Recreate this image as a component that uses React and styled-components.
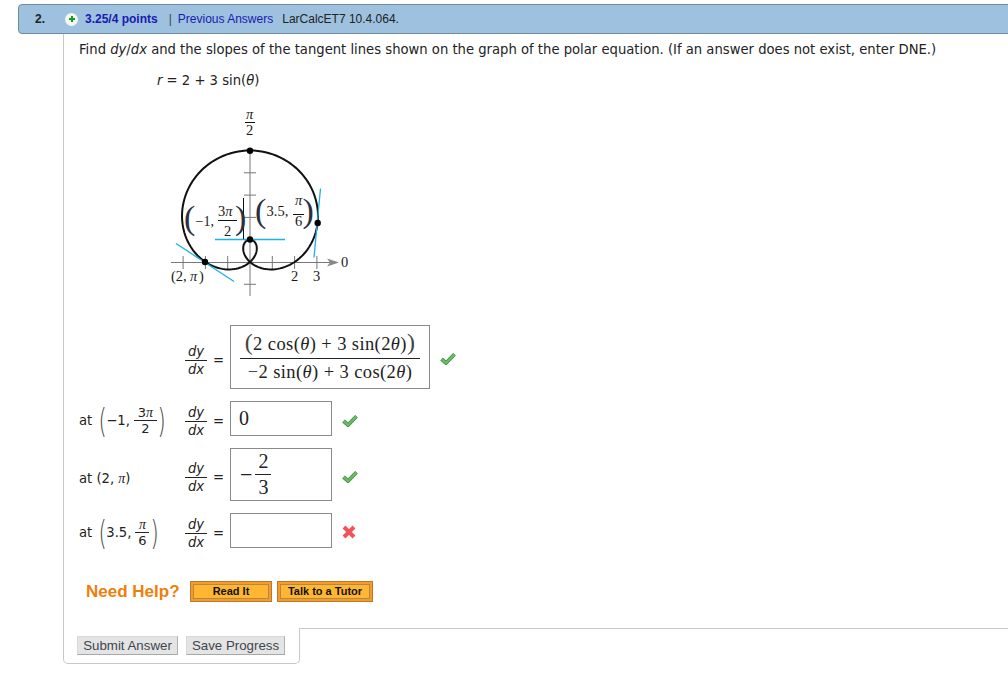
import React from "react";
import styled, { createGlobalStyle } from "styled-components";

const GlobalStyle = createGlobalStyle`
  html, body { margin: 0; padding: 0; background: #fff; }
  body { font-family: "DejaVu Sans", sans-serif; color: #222; }
`;

const ORIGIN = { x: 250, y: 263 };
const UNIT = 22.3;

// r = 2 + 3 sin(theta), in page pixels
function polarPath() {
  const pts = [];
  for (let i = 0; i <= 360; i += 2) {
    const t = (i * Math.PI) / 180;
    const r = 2 + 3 * Math.sin(t);
    const x = ORIGIN.x + r * Math.cos(t) * UNIT;
    const y = ORIGIN.y - r * Math.sin(t) * UNIT;
    pts.push(`${i === 0 ? "M" : "L"}${x.toFixed(2)} ${y.toFixed(2)}`);
  }
  return pts.join(" ");
}

const XTICKS = [-3, -2, -1, 1, 2, 3];
const YTICKS = [-1, 1, 2, 3, 4];

function PolarGraph() {
  return (
    <GraphSvg viewBox="150 100 200 200" width="200" height="200">
      <g stroke="#777" strokeWidth="1" fill="none">
        <path d="M171 263.5H330M250 152V297" />
        {XTICKS.map((k) => (
          <path key={k} d={`M${ORIGIN.x + k * UNIT} 257V270`} />
        ))}
        {YTICKS.map((k) => (
          <path key={k} d={`M244 ${ORIGIN.y - k * UNIT}H256`} />
        ))}
      </g>
      <path d="M339 263.5L327 259.5L330 263.5L327 267.5Z" fill="#888" />
      <path d={polarPath()} fill="none" stroke="#111" strokeWidth="2" />
      <g stroke="#1fb0e6" strokeWidth="1.3" fill="none">
        <path d="M215 240.5H285" />
        <path d="M176 244.5L234 282.5" />
        <path d="M320.5 189.5L314 258.5" />
      </g>
      <path d="M243.5 199V240" stroke="#111" strokeWidth="1" />
      <g fill="#000">
        <circle cx="250" cy="151.7" r="3.2" />
        <circle cx="250" cy="240.5" r="3.2" />
        <circle cx="205" cy="263" r="3.2" />
        <circle cx="317.7" cy="224" r="3.2" />
      </g>
      <GraphText>
        <tspan x="246" y="120" fontStyle="italic">π</tspan>
        <tspan x="246" y="136">2</tspan>
        <tspan x="341" y="268">0</tspan>
        <tspan x="291" y="282">2</tspan>
        <tspan x="313" y="282">3</tspan>
        <tspan x="171" y="282">(2,</tspan>
        <tspan x="190" y="282" fontStyle="italic">π</tspan>
        <tspan x="199" y="282">)</tspan>
        <tspan x="218" y="217">3</tspan>
        <tspan fontStyle="italic">π</tspan>
        <tspan x="224" y="237">2</tspan>
        <tspan x="266.5" y="217">3.5,</tspan>
        <tspan x="295" y="206" fontStyle="italic">π</tspan>
        <tspan x="295" y="227">6</tspan>
      </GraphText>
      <GraphLead x="195.5" y="227">−1,</GraphLead>
      <path d="M218 221.5H237M293 215.5H304M245 123.5H255" stroke="#111" strokeWidth="1" />
      <GraphParen x="184" y="229.5">(</GraphParen>
      <GraphParen x="235" y="229.5">)</GraphParen>
      <GraphParen x="255" y="223">(</GraphParen>
      <GraphParen x="302.5" y="223">)</GraphParen>
    </GraphSvg>
  );
}

function Check() {
  return (
    <MarkSvg viewBox="0 0 16 13" width="16" height="13">
      <path d="M1.5 7L6 11L14.5 2.2" fill="none" stroke="#3f8f3f" strokeWidth="3.8" />
      <path d="M1.5 7L6 11L14.5 2.2" fill="none" stroke="#6fbb6a" strokeWidth="2.2" />
    </MarkSvg>
  );
}

function Cross() {
  return (
    <MarkSvg viewBox="0 0 14 14" width="14" height="14">
      <path d="M2 2L12 12M12 2L2 12" fill="none" stroke="#f2545b" strokeWidth="4" />
    </MarkSvg>
  );
}

function DyDx() {
  return (
    <DerivWrap>
      <Frac>
        <Num><i>dy</i></Num>
        <Den $width={22}><i>dx</i></Den>
      </Frac>
      <Equals>=</Equals>
    </DerivWrap>
  );
}

function SansFrac({ top, bottom, width }) {
  return (
    <FracSlot $width={width}>
      <SmallNum>{top}</SmallNum>
      <SmallDen>{bottom}</SmallDen>
    </FracSlot>
  );
}

export default function App() {
  return (
    <Page>
      <GlobalStyle />
      <Header>
        <QNumber>2.</QNumber>
        <PlusBadge>
          <svg viewBox="0 0 8 8" width="8" height="8">
            <path d="M4 1V7M1 4H7" stroke="#1c9a1c" strokeWidth="2" />
          </svg>
        </PlusBadge>
        <Points>3.25/4 points</Points>
        <Divider>|</Divider>
        <HeaderLink>Previous Answers</HeaderLink>
        <SourceCode>LarCalcET7 10.4.064.</SourceCode>
      </Header>

      <Body>
        <Prompt>
          Find <i>dy</i>/<i>dx</i> and the slopes of the tangent lines shown on the graph of the polar equation. (If an answer does not exist, enter DNE.)
        </Prompt>
        <Equation>
          <i>r</i> = 2 + 3 sin(<i>θ</i>)
        </Equation>
        <PolarGraph />

        <Rows>
          <Row>
            <RowLabel />
            <DyDx />
            <AnswerBox $width={200} $height={64}>
              <Frac>
                <MathNum>
                  <BigParen>(</BigParen>2 cos(<i>θ</i>) + 3 sin(2<i>θ</i>)<BigParen>)</BigParen>
                </MathNum>
                <MathDen>−2 sin(<i>θ</i>) + 3 cos(2<i>θ</i>)</MathDen>
              </Frac>
            </AnswerBox>
            <Check />
          </Row>
          <Row>
            <RowLabel $drop={2}>
              <AtWord>at</AtWord>
              <TallParen>(</TallParen>−1,
              <SansFrac width={23} top={<>3<Pi>π</Pi></>} bottom="2" />
              <TallParen>)</TallParen>
            </RowLabel>
            <DyDx />
            <AnswerBox $width={102} $height={35}>
              <MathValue>0</MathValue>
            </AnswerBox>
            <Check />
          </Row>
          <Row>
            <RowLabel $drop={4}>
              at (2, <Pi>π</Pi>)
            </RowLabel>
            <DyDx />
            <AnswerBox $width={102} $height={53}>
              <Minus>−</Minus>
              <Frac>
                <MathValue>2</MathValue>
                <MathValueDen>3</MathValueDen>
              </Frac>
            </AnswerBox>
            <Check />
          </Row>
          <Row>
            <RowLabel $drop={2}>
              <AtWord>at</AtWord>
              <TallParen>(</TallParen>3.5,
              <SansFrac width={14} top={<Pi>π</Pi>} bottom="6" />
              <TallParen>)</TallParen>
            </RowLabel>
            <DyDx />
            <AnswerBox $width={102} $height={35} />
            <Cross />
          </Row>
        </Rows>

        <HelpRow>
          <HelpLabel>Need Help?</HelpLabel>
          <HelpButton $width={82}>Read It</HelpButton>
          <HelpButton $width={96}>Talk to a Tutor</HelpButton>
        </HelpRow>
      </Body>

      <Footer>
        <ButtonTab>
          <GrayButton $width={101}>Submit Answer</GrayButton>
          <GrayButton $width={99}>Save Progress</GrayButton>
        </ButtonTab>
        <FooterRest />
      </Footer>
    </Page>
  );
}

const Page = styled.div`
  width: 1008px;
  height: 676px;
  padding: 4px 0 0 18px;
  box-sizing: border-box;
  overflow: hidden;
`;

const Header = styled.div`
  display: flex;
  align-items: center;
  height: 28px;
  margin-right: -8px;
  background: #9dc1de;
  border: 1px solid #6f8ba3;
  border-radius: 4px;
  font-family: "Liberation Sans", Arial, sans-serif;
  font-size: 12px;
  color: #222;
`;

const QNumber = styled.b`
  width: 30px;
  margin-left: 16px;
`;

const PlusBadge = styled.span`
  display: flex;
  align-items: center;
  justify-content: center;
  width: 13px;
  height: 13px;
  margin-right: 7px;
  border-radius: 50%;
  background: #f4f6f4;
`;

const Points = styled.b`
  color: #1a1ab0;
`;

const Divider = styled.span`
  margin: 0 6px 0 11px;
  color: #444;
`;

const HeaderLink = styled.span`
  color: #1a1ab0;
  margin-right: 9px;
`;

const SourceCode = styled.span``;

const Body = styled.div`
  margin-left: 45px;
  height: 594px;
  padding-left: 15px;
  border-left: 1px solid #c8c8c8;
  font-size: 13.18px;
`;

const Prompt = styled.div`
  padding-top: 8px;
  line-height: 16px;
  white-space: nowrap;
`;

const Equation = styled.div`
  margin: 15px 0 0 78px;
  line-height: 16px;
`;

const GraphSvg = styled.svg`
  display: block;
  margin: 10px 0 0 71px;
`;

const GraphText = styled.text`
  font-family: "Liberation Serif", serif;
  font-size: 14.5px;
  fill: #1a1a1a;
`;

const GraphLead = styled(GraphText)`
  font-size: 14px;
`;

const GraphParen = styled.text`
  font-family: "Liberation Serif", serif;
  font-size: 34px;
  font-weight: 400;
  fill: #2a3040;
`;

const MarkSvg = styled.svg`
  margin: 3px 0 0 10px;
  flex: none;
`;

const Rows = styled.div`
  display: flex;
  flex-direction: column;
  gap: 12px;
  margin-top: 26px;
`;

const Row = styled.div`
  display: flex;
  align-items: center;
`;

const RowLabel = styled.div`
  display: flex;
  align-items: center;
  width: 106px;
  flex: none;
  white-space: pre;
  transform: translateY(${(p) => p.$drop || 0}px);
`;

const AtWord = styled.span`
  width: 19px;
`;

const DerivWrap = styled.div`
  display: flex;
  align-items: center;
  width: 45px;
  height: 35px;
  transform: translateY(3px);
  flex: none;
`;

const Frac = styled.span`
  display: inline-flex;
  flex-direction: column;
  align-items: center;
`;

const FracSlot = styled(Frac)`
  width: ${(p) => p.$width}px;
  margin: 0 1px 0 4px;
`;

const Num = styled.span`
  line-height: 17px;
`;

const Den = styled.span`
  width: ${(p) => p.$width}px;
  text-align: center;
  line-height: 17px;
  border-top: 1px solid #222;
`;

const SmallNum = styled.span`
  line-height: 15px;
  font-size: 13px;
`;

const SmallDen = styled.span`
  align-self: stretch;
  text-align: center;
  line-height: 15px;
  font-size: 13px;
  border-top: 1px solid #222;
`;

const Equals = styled.span`
  margin-left: 6px;
`;

const AnswerBox = styled.div`
  display: flex;
  align-items: center;
  justify-content: ${(p) => (p.$width > 150 ? "center" : "flex-start")};
  box-sizing: border-box;
  width: ${(p) => p.$width}px;
  height: ${(p) => p.$height}px;
  padding-left: ${(p) => (p.$width > 150 ? 0 : 5)}px;
  border: 1px solid #8a8a8a;
  flex: none;
`;

const MathNum = styled.span`
  font-family: "Liberation Serif", serif;
  font-size: 18.5px;
  letter-spacing: 0.4px;
  line-height: 27px;
  white-space: pre;
`;

const MathDen = styled(MathNum)`
  width: 180px;
  text-align: center;
  border-top: 1px solid #222;
`;

const BigParen = styled.span`
  font-size: 24px;
  font-weight: 400;
  color: #444;
`;

const MathValue = styled.span`
  font-family: "Liberation Serif", serif;
  font-size: 20px;
  line-height: 25px;
  padding: 0 3px;
`;

const MathValueDen = styled(MathValue)`
  align-self: stretch;
  text-align: center;
  border-top: 1px solid #222;
`;

const Minus = styled.span`
  font-family: "Liberation Serif", serif;
  font-size: 22px;
  margin: 0 3px 0 4px;
`;

const TallParen = styled.span`
  display: flex;
  justify-content: center;
  font-size: 34px;
  font-weight: 200;
  line-height: 34px;
  color: #444;
  transform: scaleX(0.62);
  margin: 0 -2.5px;
`;

const Pi = styled.i`
  font-family: "Liberation Serif", serif;
  font-size: 14px;
`;

const HelpRow = styled.div`
  display: flex;
  align-items: center;
  margin: 33px 0 0 7px;
  font-family: "Liberation Sans", Arial, sans-serif;
`;

const HelpLabel = styled.span`
  width: 104px;
  font-size: 17px;
  font-weight: 700;
  color: #ee7f0a;
`;

const HelpButton = styled.button`
  box-sizing: border-box;
  width: ${(p) => p.$width}px;
  height: 21px;
  margin-right: 5px;
  padding: 0 0 2px;
  background: #ffb733;
  border: 1px solid #b87a2b;
  box-shadow: inset 0 0 0 2px #f79a2c, inset 0 0 0 3px #b8863d;
  font-family: inherit;
  font-size: 11px;
  font-weight: 700;
  color: #111;
`;

const Footer = styled.div`
  display: flex;
  margin-left: 45px;
`;

const ButtonTab = styled.div`
  display: flex;
  gap: 8px;
  box-sizing: border-box;
  width: 237px;
  height: 36px;
  padding: 8px 0 0 13px;
  border: 1px solid #c8c8c8;
  border-top: 0;
  border-radius: 0 0 5px 5px;
`;

const FooterRest = styled.div`
  flex: 1;
  margin-left: -1px;
  height: 0;
  border-top: 1px solid #c8c8c8;
  border-top-left-radius: 3px;
`;

const GrayButton = styled.button`
  box-sizing: border-box;
  width: ${(p) => p.$width}px;
  height: 19px;
  padding: 0;
  background: #e4e4e4;
  border: 1px solid;
  border-color: #d8d8d8 #b0b0b0 #a8a8a8 #d8d8d8;
  font-family: "Liberation Sans", Arial, sans-serif;
  font-size: 13.3px;
  line-height: 16px;
  color: #3f4650;
`;
